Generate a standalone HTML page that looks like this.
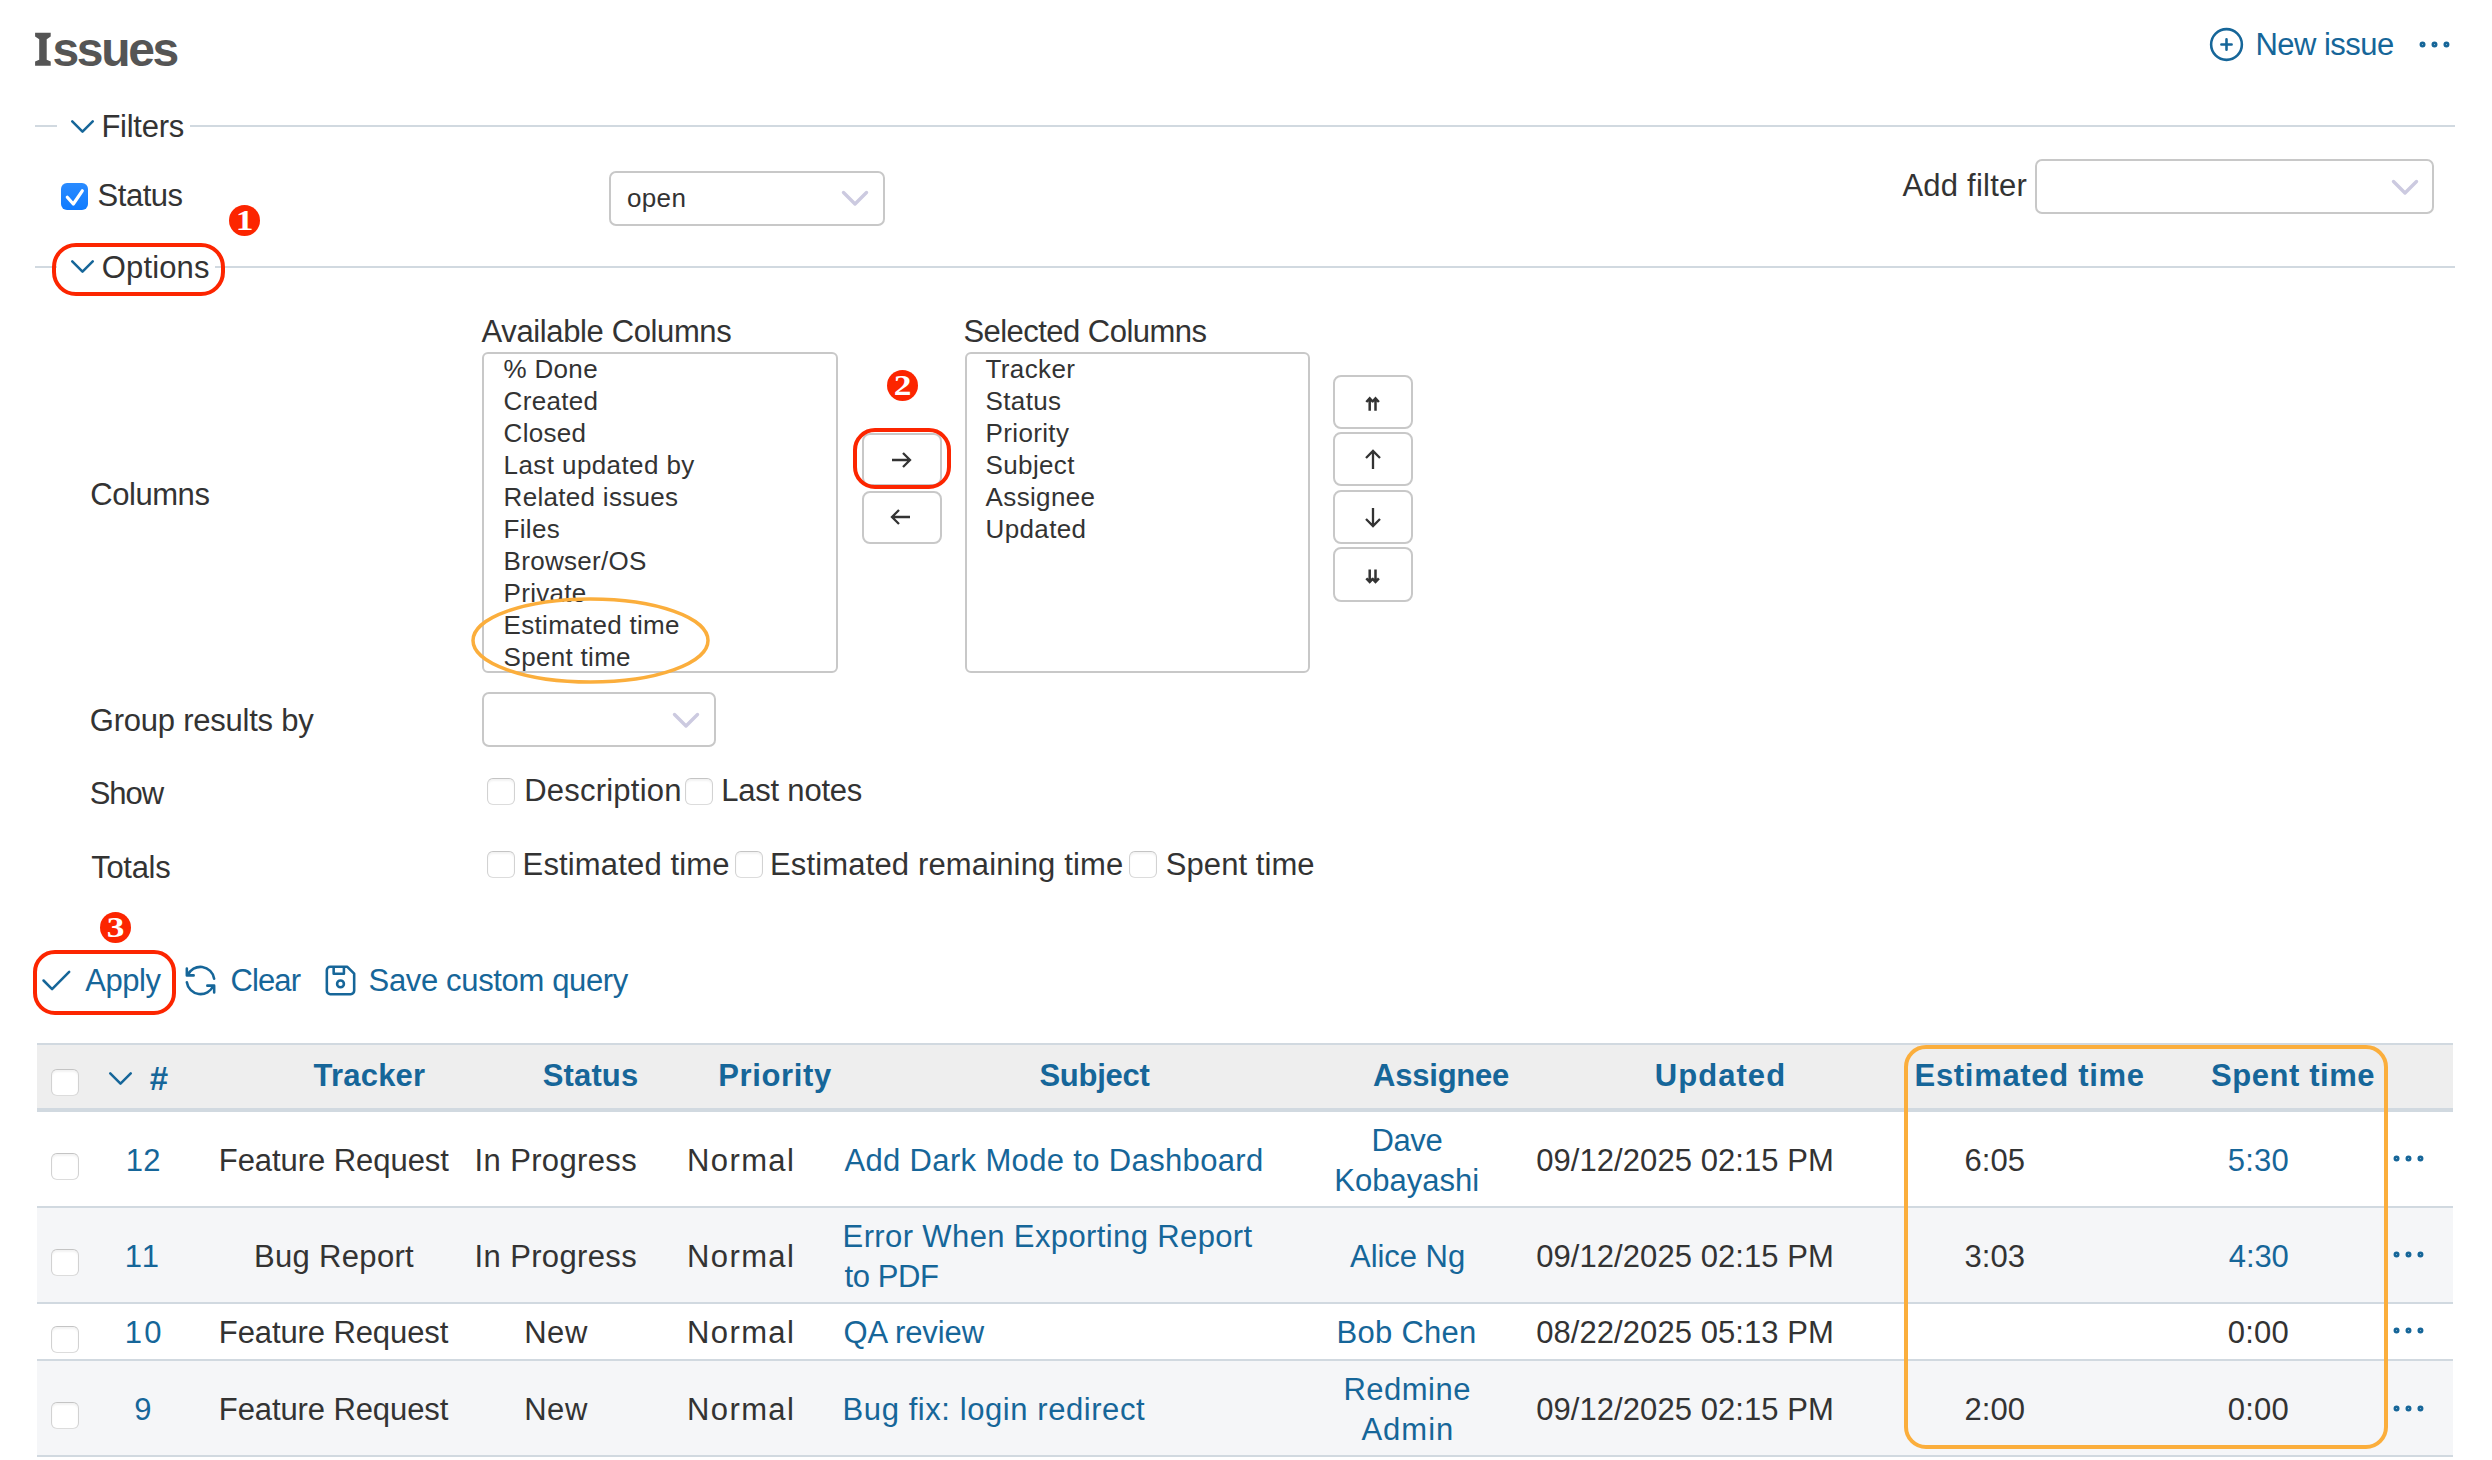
<!DOCTYPE html>
<html><head><meta charset="utf-8"><style>
html,body{margin:0;padding:0;background:#fff;}
body{width:2492px;height:1460px;overflow:hidden;position:relative;font-family:"Liberation Sans",sans-serif;color:#333;}
.a{position:absolute;}
.t{position:absolute;white-space:nowrap;}
.hl{position:absolute;height:2px;background:#d1d9e0;}
.cb{position:absolute;width:26px;height:25px;border:1px solid #d2d2d2;border-top-color:#c4c4c4;border-bottom-color:#dcdcdc;border-radius:6px;background:#fff;box-shadow:inset 0 2px 2px rgba(0,0,0,0.05);}
.sel{position:absolute;border:2px solid #c8c8c8;border-radius:7px;background:#fff;box-sizing:border-box;}
.lb{position:absolute;border:2px solid #c8c8c8;border-radius:6px;background:#fff;box-sizing:border-box;}
.btn{position:absolute;border:2px solid #c8c8c8;border-radius:8px;background:#fff;box-sizing:border-box;}
.red{position:absolute;border:4px solid #fc2500;box-sizing:border-box;z-index:5;}
.badge{position:absolute;width:31px;height:31px;border-radius:50%;background:#fc2500;color:#fff;font-family:"Liberation Serif",serif;font-weight:bold;font-size:30px;line-height:30px;text-align:center;}
svg{position:absolute;overflow:visible;}
.ic{fill:none;stroke:#166699;stroke-width:1.5;stroke-linecap:round;stroke-linejoin:round;}
.chev{fill:none;stroke:#cccae0;stroke-width:3.4;stroke-linecap:round;stroke-linejoin:round;}
.arr{fill:none;stroke:#333;stroke-width:2.3;stroke-linecap:butt;stroke-linejoin:miter;}
</style></head><body>
<svg style="left:0;top:0" width="60" height="70" viewBox="0 0 60 70"><path fill="#555" d="M35.1 32.7H50.7V36.6L46.7 39.2V59.8L50.7 61.5V65.7H35.1V61.5L39.2 59.8V39.2L35.1 36.6Z"/></svg>
<!-- header icons -->
<svg style="left:2206px;top:24px" width="41" height="41" viewBox="0 0 24 24"><path class="ic" d="M3 12a9 9 0 1 0 18 0a9 9 0 0 0 -18 0M9 12h6M12 9v6"/></svg>
<svg style="left:2414px;top:24px" width="41" height="41" viewBox="0 0 24 24"><path class="ic" d="M4 12a1 1 0 1 0 2 0a1 1 0 1 0 -2 0M11 12a1 1 0 1 0 2 0a1 1 0 1 0 -2 0M18 12a1 1 0 1 0 2 0a1 1 0 1 0 -2 0"/></svg>

<!-- filters -->
<div class="hl" style="left:35px;top:125px;width:22px;"></div>
<div class="hl" style="left:190px;top:125px;width:2265px;"></div>
<svg style="left:62px;top:106px" width="41" height="41" viewBox="0 0 24 24"><path class="ic" d="M6 9l6 6l6 -6"/></svg>
<div class="a" style="left:61px;top:183px;width:27px;height:27px;border-radius:6px;background:linear-gradient(#2a8bff,#0f7bff);"></div>
<svg style="left:61px;top:183px" width="27" height="27" viewBox="0 0 27 27"><path d="M6.3 14.2l6 6.8l9 -13.2" fill="none" stroke="#fff" stroke-width="3.2" stroke-linecap="round" stroke-linejoin="round"/></svg>
<div class="sel" style="left:609px;top:171px;width:276px;height:55px;"></div>
<svg style="left:841px;top:190px" width="28" height="17" viewBox="0 0 28 17"><path class="chev" d="M2.5 2.5l11.5 11.5l11.5 -11.5"/></svg>
<div class="sel" style="left:2035px;top:159px;width:399px;height:55px;"></div>
<svg style="left:2391px;top:179px" width="28" height="17" viewBox="0 0 28 17"><path class="chev" d="M2.5 2.5l11.5 11.5l11.5 -11.5"/></svg>
<div class="badge" style="left:229px;top:205px;"><span style="display:inline-block;transform:scaleX(1.18)">1</span></div>

<!-- options -->
<div class="hl" style="left:35px;top:266px;width:22px;"></div>
<div class="hl" style="left:215px;top:266px;width:2240px;"></div>
<svg style="left:62px;top:246px" width="41" height="41" viewBox="0 0 24 24"><path class="ic" d="M6 9l6 6l6 -6"/></svg>
<div class="red" style="left:52px;top:243px;width:173px;height:53px;border-radius:24px;"></div>

<!-- columns -->
<div class="lb" style="left:482px;top:352px;width:356px;height:321px;"></div>
<div class="lb" style="left:965px;top:352px;width:345px;height:321px;"></div>
<div class="btn" style="left:862px;top:433px;width:80px;height:53px;"></div>
<div class="btn" style="left:862px;top:491px;width:80px;height:53px;"></div>
<svg style="left:886px;top:445px" width="30" height="30" viewBox="0 0 30 30"><path class="arr" d="M6 15h18M17 8l7 7l-7 7"/></svg>
<svg style="left:886px;top:502px" width="30" height="30" viewBox="0 0 30 30"><path class="arr" d="M24 15h-18M13 8l-7 7l7 7"/></svg>
<div class="badge" style="left:887px;top:370px;"><span style="display:inline-block;transform:scaleX(1.18)">2</span></div>
<div class="red" style="left:853px;top:428px;width:98px;height:61px;border-radius:22px;"></div>
<svg class="a" style="left:470px;top:596px;z-index:5" width="241" height="89" viewBox="0 0 241 89"><ellipse cx="120.5" cy="44.5" rx="117.5" ry="41.5" fill="none" stroke="#fbae3c" stroke-width="3.5"/></svg>

<div class="btn" style="left:1333px;top:375px;width:80px;height:54px;"></div>
<div class="btn" style="left:1333px;top:432px;width:80px;height:54px;"></div>
<div class="btn" style="left:1333px;top:490px;width:80px;height:54px;"></div>
<div class="btn" style="left:1333px;top:547px;width:80px;height:55px;"></div>
<svg style="left:1358px;top:389px" width="30" height="30" viewBox="0 0 30 30"><path class="arr" style="stroke-width:2.5" d="M11.7 21.8V9.6M8.3 13l3.4-3.6l3.4 3.6M17.5 21.8V9.6M14.1 13l3.4-3.6l3.4 3.6"/></svg>
<svg style="left:1358px;top:445px" width="30" height="30" viewBox="0 0 30 30"><path class="arr" d="M15 24v-18M8 13l7-7l7 7"/></svg>
<svg style="left:1358px;top:502px" width="30" height="30" viewBox="0 0 30 30"><path class="arr" d="M15 6v18M8 17l7 7l7-7"/></svg>
<svg style="left:1358px;top:562px" width="30" height="30" viewBox="0 0 30 30"><path class="arr" style="stroke-width:2.5" d="M11.7 7.5V19.7M8.3 16.3l3.4 3.6l3.4-3.6M17.5 7.5V19.7M14.1 16.3l3.4 3.6l3.4-3.6"/></svg>

<!-- group / show / totals -->
<div class="sel" style="left:482px;top:692px;width:234px;height:55px;"></div>
<svg style="left:672px;top:711.5px" width="28" height="17" viewBox="0 0 28 17"><path class="chev" d="M2.5 2.5l11.5 11.5l11.5 -11.5"/></svg>
<div class="cb" style="left:487px;top:778px;"></div>
<div class="cb" style="left:685px;top:778px;"></div>
<div class="cb" style="left:487px;top:851px;"></div>
<div class="cb" style="left:735px;top:851px;"></div>
<div class="cb" style="left:1129px;top:851px;"></div>

<!-- actions -->
<div class="badge" style="left:100px;top:912px;"><span style="display:inline-block;transform:scaleX(1.18)">3</span></div>
<svg style="left:35px;top:960px" width="41" height="41" viewBox="0 0 24 24"><path class="ic" d="M5 12l5 5l10 -10"/></svg>
<svg style="left:180px;top:960px" width="41" height="41" viewBox="0 0 24 24"><path class="ic" d="M20 11a8.1 8.1 0 0 0 -15.5 -2m-.5 -4v4h4M4 13a8.1 8.1 0 0 0 15.5 2m.5 4v-4h-4"/></svg>
<svg style="left:320px;top:960px" width="41" height="41" viewBox="0 0 24 24"><path class="ic" d="M6 4h10l4 4v10a2 2 0 0 1 -2 2h-12a2 2 0 0 1 -2 -2v-12a2 2 0 0 1 2 -2M10 14a2 2 0 1 0 4 0a2 2 0 1 0 -4 0M14 4l0 4l-6 0l0 -4"/></svg>
<div class="red" style="left:33px;top:950px;width:143px;height:65px;border-radius:22px;"></div>

<!-- table -->
<div class="a" style="left:37px;top:1043px;width:2416px;height:2px;background:#d1d9e0;"></div>
<div class="a" style="left:37px;top:1045px;width:2416px;height:63px;background:#eeeeee;"></div>
<div class="a" style="left:37px;top:1108px;width:2416px;height:4px;background:#d1d9e0;"></div>
<div class="a" style="left:37px;top:1206px;width:2416px;height:2px;background:#d1d9e0;"></div>
<div class="a" style="left:37px;top:1208px;width:2416px;height:94px;background:#f5f6f8;"></div>
<div class="a" style="left:37px;top:1302px;width:2416px;height:2px;background:#d1d9e0;"></div>
<div class="a" style="left:37px;top:1359px;width:2416px;height:2px;background:#d1d9e0;"></div>
<div class="a" style="left:37px;top:1361px;width:2416px;height:94px;background:#f5f6f8;"></div>
<div class="a" style="left:37px;top:1455px;width:2416px;height:2px;background:#d1d9e0;"></div>
<div class="cb" style="left:51px;top:1069px;"></div>
<svg style="left:100px;top:1058px" width="41" height="41" viewBox="0 0 24 24"><path class="ic" d="M6 9l6 6l6 -6"/></svg>
<div class="cb" style="left:51px;top:1153px;"></div>
<div class="cb" style="left:51px;top:1249px;"></div>
<div class="cb" style="left:51px;top:1326px;"></div>
<div class="cb" style="left:51px;top:1402px;"></div>
<svg style="left:2388px;top:1138px" width="41" height="41" viewBox="0 0 24 24"><path class="ic" d="M4 12a1 1 0 1 0 2 0a1 1 0 1 0 -2 0M11 12a1 1 0 1 0 2 0a1 1 0 1 0 -2 0M18 12a1 1 0 1 0 2 0a1 1 0 1 0 -2 0"/></svg>
<svg style="left:2388px;top:1234px" width="41" height="41" viewBox="0 0 24 24"><path class="ic" d="M4 12a1 1 0 1 0 2 0a1 1 0 1 0 -2 0M11 12a1 1 0 1 0 2 0a1 1 0 1 0 -2 0M18 12a1 1 0 1 0 2 0a1 1 0 1 0 -2 0"/></svg>
<svg style="left:2388px;top:1310px" width="41" height="41" viewBox="0 0 24 24"><path class="ic" d="M4 12a1 1 0 1 0 2 0a1 1 0 1 0 -2 0M11 12a1 1 0 1 0 2 0a1 1 0 1 0 -2 0M18 12a1 1 0 1 0 2 0a1 1 0 1 0 -2 0"/></svg>
<svg style="left:2388px;top:1388px" width="41" height="41" viewBox="0 0 24 24"><path class="ic" d="M4 12a1 1 0 1 0 2 0a1 1 0 1 0 -2 0M11 12a1 1 0 1 0 2 0a1 1 0 1 0 -2 0M18 12a1 1 0 1 0 2 0a1 1 0 1 0 -2 0"/></svg>
<div class="a" style="z-index:5;left:1904px;top:1045px;width:484px;height:404px;border:4px solid #fbae3c;border-radius:22px;box-sizing:border-box;"></div>

<div class="t" style="left:52.5px;top:26px;font-size:48px;line-height:48px;color:#555;font-weight:bold;letter-spacing:-2.35px;">ssues</div>
<div class="t" style="left:2255.4px;top:29px;font-size:31px;line-height:31px;color:#166699;letter-spacing:-0.53px;">New issue</div>
<div class="t" style="left:101.4px;top:111px;font-size:31px;line-height:31px;color:#333;letter-spacing:-0.25px;">Filters</div>
<div class="t" style="left:97.6px;top:180px;font-size:31px;line-height:31px;color:#333;letter-spacing:-0.48px;">Status</div>
<div class="t" style="left:626.9px;top:185px;font-size:26px;line-height:26px;color:#333;letter-spacing:0.40px;">open</div>
<div class="t" style="left:1902.4px;top:170px;font-size:31px;line-height:31px;color:#333;letter-spacing:0.24px;">Add filter</div>
<div class="t" style="left:101.8px;top:252px;font-size:31px;line-height:31px;color:#333;letter-spacing:0.14px;">Options</div>
<div class="t" style="left:90.2px;top:479px;font-size:31px;line-height:31px;color:#333;letter-spacing:-0.43px;">Columns</div>
<div class="t" style="left:481.6px;top:316px;font-size:31px;line-height:31px;color:#333;letter-spacing:-0.38px;">Available Columns</div>
<div class="t" style="left:963.4px;top:316px;font-size:31px;line-height:31px;color:#333;letter-spacing:-0.53px;">Selected Columns</div>
<div class="t" style="left:503.6px;top:356px;font-size:26px;line-height:26px;color:#333;letter-spacing:0.30px;">% Done</div>
<div class="t" style="left:503.6px;top:388px;font-size:26px;line-height:26px;color:#333;letter-spacing:0.30px;">Created</div>
<div class="t" style="left:503.6px;top:420px;font-size:26px;line-height:26px;color:#333;letter-spacing:0.30px;">Closed</div>
<div class="t" style="left:503.6px;top:452px;font-size:26px;line-height:26px;color:#333;letter-spacing:0.41px;">Last updated by</div>
<div class="t" style="left:503.6px;top:484px;font-size:26px;line-height:26px;color:#333;letter-spacing:0.30px;">Related issues</div>
<div class="t" style="left:503.6px;top:516px;font-size:26px;line-height:26px;color:#333;letter-spacing:0.30px;">Files</div>
<div class="t" style="left:503.6px;top:548px;font-size:26px;line-height:26px;color:#333;letter-spacing:0.30px;">Browser/OS</div>
<div class="t" style="left:503.6px;top:580px;font-size:26px;line-height:26px;color:#333;letter-spacing:0.30px;">Private</div>
<div class="t" style="left:503.6px;top:612px;font-size:26px;line-height:26px;color:#333;letter-spacing:0.30px;">Estimated time</div>
<div class="t" style="left:503.6px;top:644px;font-size:26px;line-height:26px;color:#333;letter-spacing:0.30px;">Spent time</div>
<div class="t" style="left:985.6px;top:356px;font-size:26px;line-height:26px;color:#333;letter-spacing:0.35px;">Tracker</div>
<div class="t" style="left:985.6px;top:388px;font-size:26px;line-height:26px;color:#333;letter-spacing:0.35px;">Status</div>
<div class="t" style="left:985.6px;top:420px;font-size:26px;line-height:26px;color:#333;letter-spacing:0.35px;">Priority</div>
<div class="t" style="left:985.6px;top:452px;font-size:26px;line-height:26px;color:#333;letter-spacing:0.35px;">Subject</div>
<div class="t" style="left:985.6px;top:484px;font-size:26px;line-height:26px;color:#333;letter-spacing:0.35px;">Assignee</div>
<div class="t" style="left:985.6px;top:516px;font-size:26px;line-height:26px;color:#333;letter-spacing:0.35px;">Updated</div>
<div class="t" style="left:89.8px;top:705px;font-size:31px;line-height:31px;color:#333;letter-spacing:-0.23px;">Group results by</div>
<div class="t" style="left:89.8px;top:778px;font-size:31px;line-height:31px;color:#333;letter-spacing:-1.10px;">Show</div>
<div class="t" style="left:524.2px;top:775px;font-size:31px;line-height:31px;color:#333;letter-spacing:0.22px;">Description</div>
<div class="t" style="left:721.2px;top:775px;font-size:31px;line-height:31px;color:#333;letter-spacing:-0.21px;">Last notes</div>
<div class="t" style="left:91.2px;top:852px;font-size:31px;line-height:31px;color:#333;letter-spacing:-0.30px;">Totals</div>
<div class="t" style="left:522.6px;top:849px;font-size:31px;line-height:31px;color:#333;letter-spacing:0.15px;">Estimated time</div>
<div class="t" style="left:770.0px;top:849px;font-size:31px;line-height:31px;color:#333;letter-spacing:0.15px;">Estimated remaining time</div>
<div class="t" style="left:1165.8px;top:849px;font-size:31px;line-height:31px;color:#333;letter-spacing:0.07px;">Spent time</div>
<div class="t" style="left:85.2px;top:965px;font-size:31px;line-height:31px;color:#166699;letter-spacing:-0.45px;">Apply</div>
<div class="t" style="left:230.4px;top:965px;font-size:31px;line-height:31px;color:#166699;letter-spacing:-0.85px;">Clear</div>
<div class="t" style="left:368.6px;top:965px;font-size:31px;line-height:31px;color:#166699;letter-spacing:-0.35px;">Save custom query</div>
<div class="t" style="left:149.8px;top:1062px;font-size:33px;line-height:33px;color:#166699;font-weight:bold;">#</div>
<div class="t" style="left:313.6px;top:1060px;font-size:31px;line-height:31px;color:#166699;font-weight:bold;letter-spacing:0.20px;">Tracker</div>
<div class="t" style="left:542.8px;top:1060px;font-size:31px;line-height:31px;color:#166699;font-weight:bold;letter-spacing:0.12px;">Status</div>
<div class="t" style="left:718.2px;top:1060px;font-size:31px;line-height:31px;color:#166699;font-weight:bold;letter-spacing:0.63px;">Priority</div>
<div class="t" style="left:1039.4px;top:1060px;font-size:31px;line-height:31px;color:#166699;font-weight:bold;letter-spacing:-0.27px;">Subject</div>
<div class="t" style="left:1373.0px;top:1060px;font-size:31px;line-height:31px;color:#166699;font-weight:bold;letter-spacing:-0.21px;">Assignee</div>
<div class="t" style="left:1654.8px;top:1060px;font-size:31px;line-height:31px;color:#166699;font-weight:bold;letter-spacing:1.05px;">Updated</div>
<div class="t" style="left:1914.6px;top:1060px;font-size:31px;line-height:31px;color:#166699;font-weight:bold;letter-spacing:0.68px;">Estimated time</div>
<div class="t" style="left:2211.0px;top:1060px;font-size:31px;line-height:31px;color:#166699;font-weight:bold;letter-spacing:0.57px;">Spent time</div>
<div class="t" style="left:125.8px;top:1145px;font-size:31px;line-height:31px;color:#166699;letter-spacing:0.20px;">12</div>
<div class="t" style="left:218.8px;top:1145px;font-size:31px;line-height:31px;color:#333;letter-spacing:-0.06px;">Feature Request</div>
<div class="t" style="left:474.6px;top:1145px;font-size:31px;line-height:31px;color:#333;letter-spacing:0.36px;">In Progress</div>
<div class="t" style="left:687.0px;top:1145px;font-size:31px;line-height:31px;color:#333;letter-spacing:1.40px;">Normal</div>
<div class="t" style="left:124.8px;top:1241px;font-size:31px;line-height:31px;color:#166699;letter-spacing:1.90px;">11</div>
<div class="t" style="left:254.0px;top:1241px;font-size:31px;line-height:31px;color:#333;letter-spacing:0.32px;">Bug Report</div>
<div class="t" style="left:474.6px;top:1241px;font-size:31px;line-height:31px;color:#333;letter-spacing:0.36px;">In Progress</div>
<div class="t" style="left:687.0px;top:1241px;font-size:31px;line-height:31px;color:#333;letter-spacing:1.40px;">Normal</div>
<div class="t" style="left:124.8px;top:1317px;font-size:31px;line-height:31px;color:#166699;letter-spacing:2.30px;">10</div>
<div class="t" style="left:218.8px;top:1317px;font-size:31px;line-height:31px;color:#333;letter-spacing:-0.10px;">Feature Request</div>
<div class="t" style="left:524.2px;top:1317px;font-size:31px;line-height:31px;color:#333;letter-spacing:0.55px;">New</div>
<div class="t" style="left:687.0px;top:1317px;font-size:31px;line-height:31px;color:#333;letter-spacing:1.40px;">Normal</div>
<div class="t" style="left:134.2px;top:1394px;font-size:31px;line-height:31px;color:#166699;">9</div>
<div class="t" style="left:218.8px;top:1394px;font-size:31px;line-height:31px;color:#333;letter-spacing:-0.10px;">Feature Request</div>
<div class="t" style="left:524.2px;top:1394px;font-size:31px;line-height:31px;color:#333;letter-spacing:0.55px;">New</div>
<div class="t" style="left:687.0px;top:1394px;font-size:31px;line-height:31px;color:#333;letter-spacing:1.40px;">Normal</div>
<div class="t" style="left:844.4px;top:1145px;font-size:31px;line-height:31px;color:#166699;letter-spacing:0.35px;">Add Dark Mode to Dashboard</div>
<div class="t" style="left:842.6px;top:1221px;font-size:31px;line-height:31px;color:#166699;letter-spacing:0.38px;">Error When Exporting Report</div>
<div class="t" style="left:844.6px;top:1261px;font-size:31px;line-height:31px;color:#166699;letter-spacing:-0.42px;">to PDF</div>
<div class="t" style="left:843.6px;top:1317px;font-size:31px;line-height:31px;color:#166699;letter-spacing:-0.10px;">QA review</div>
<div class="t" style="left:842.6px;top:1394px;font-size:31px;line-height:31px;color:#166699;letter-spacing:0.57px;">Bug fix: login redirect</div>
<div class="t" style="left:1371.4px;top:1125px;font-size:31px;line-height:31px;color:#166699;letter-spacing:-0.33px;">Dave</div>
<div class="t" style="left:1334.2px;top:1165px;font-size:31px;line-height:31px;color:#166699;letter-spacing:0.03px;">Kobayashi</div>
<div class="t" style="left:1350.0px;top:1241px;font-size:31px;line-height:31px;color:#166699;letter-spacing:-0.03px;">Alice Ng</div>
<div class="t" style="left:1336.6px;top:1317px;font-size:31px;line-height:31px;color:#166699;letter-spacing:0.26px;">Bob Chen</div>
<div class="t" style="left:1343.4px;top:1374px;font-size:31px;line-height:31px;color:#166699;letter-spacing:0.50px;">Redmine</div>
<div class="t" style="left:1361.4px;top:1414px;font-size:31px;line-height:31px;color:#166699;letter-spacing:1.00px;">Admin</div>
<div class="t" style="left:1536.2px;top:1145px;font-size:31px;line-height:31px;color:#333;letter-spacing:0.07px;">09/12/2025 02:15 PM</div>
<div class="t" style="left:1536.2px;top:1241px;font-size:31px;line-height:31px;color:#333;letter-spacing:0.07px;">09/12/2025 02:15 PM</div>
<div class="t" style="left:1536.2px;top:1317px;font-size:31px;line-height:31px;color:#333;letter-spacing:0.07px;">08/22/2025 05:13 PM</div>
<div class="t" style="left:1536.2px;top:1394px;font-size:31px;line-height:31px;color:#333;letter-spacing:0.07px;">09/12/2025 02:15 PM</div>
<div class="t" style="left:1964.4px;top:1145px;font-size:31px;line-height:31px;color:#333;letter-spacing:0.10px;">6:05</div>
<div class="t" style="left:1964.4px;top:1241px;font-size:31px;line-height:31px;color:#333;letter-spacing:0.10px;">3:03</div>
<div class="t" style="left:1964.4px;top:1394px;font-size:31px;line-height:31px;color:#333;letter-spacing:0.10px;">2:00</div>
<div class="t" style="left:2227.8px;top:1145px;font-size:31px;line-height:31px;color:#166699;letter-spacing:0.20px;">5:30</div>
<div class="t" style="left:2228.8px;top:1241px;font-size:31px;line-height:31px;color:#166699;letter-spacing:-0.13px;">4:30</div>
<div class="t" style="left:2227.8px;top:1317px;font-size:31px;line-height:31px;color:#333;letter-spacing:0.20px;">0:00</div>
<div class="t" style="left:2227.8px;top:1394px;font-size:31px;line-height:31px;color:#333;letter-spacing:0.20px;">0:00</div>
</body></html>
